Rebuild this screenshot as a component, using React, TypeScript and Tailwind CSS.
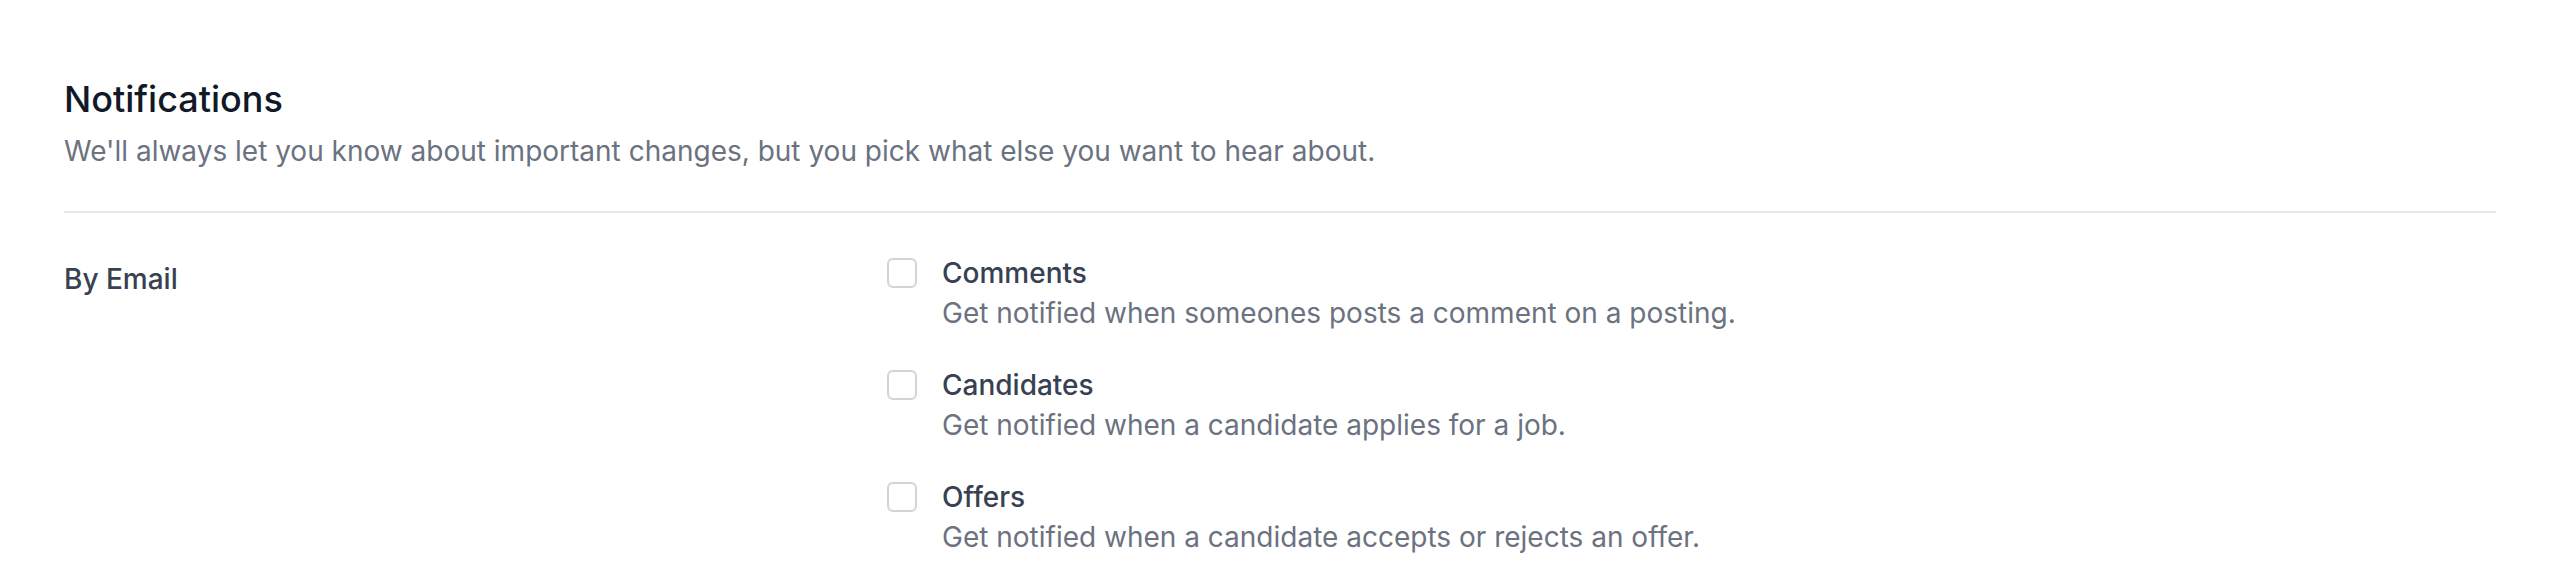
import React from "react";

const items = [
  { title: "Comments", desc: "Get notified when someones posts a comment on a posting." },
  { title: "Candidates", desc: "Get notified when a candidate applies for a job." },
  { title: "Offers", desc: "Get notified when a candidate accepts or rejects an offer." },
];

export default function App() {
  return (
    <div
      className="min-h-[587px] bg-white px-16 pt-[71px]"
      style={{ fontFamily: "Inter, 'Noto Sans', sans-serif" }}
    >
      <div className="border-b-2 border-[#e5e7eb] pb-[40px]">
        <h2 className="text-[36px] leading-[56px] font-medium text-[#111827]">Notifications</h2>
        <p className="mt-[4px] text-[28px] leading-[40px] text-[#6b7280]">
          We'll always let you know about important changes, but you pick what else you want to hear about.
        </p>
      </div>
      <div className="flex pt-[40px]">
        <div className="w-[823px] shrink-0 pt-[6px] text-[28px] leading-[40px] font-medium text-[#374151]">By Email</div>
        <div className="flex flex-col gap-[32px]">
          {items.map((it) => (
            <label key={it.title} className="flex items-start gap-[25px]">
              <span className="mt-[5px] block h-[30px] w-[30px] shrink-0 rounded-[6px] border-2 border-[#d1d5db] bg-white" />
              <span className="flex flex-col">
                <span className="text-[28px] leading-[40px] font-medium text-[#374151]">{it.title}</span>
                <span className="text-[28px] leading-[40px] text-[#6b7280]">{it.desc}</span>
              </span>
            </label>
          ))}
        </div>
      </div>
    </div>
  );
}
